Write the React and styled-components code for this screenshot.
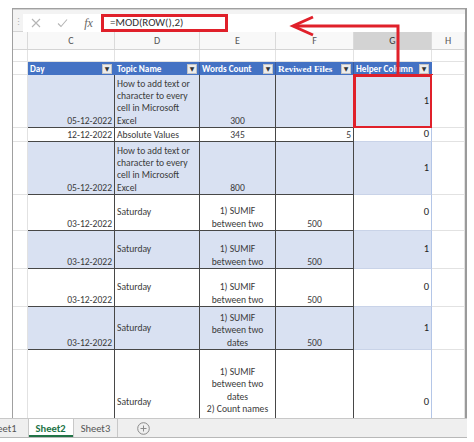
import React from 'react'
import styled, { createGlobalStyle } from 'styled-components'

const COLS = '15px 87px 85px 76px 78px 78px 1fr'
const DARK = '#474747'
const GRID = '#e2e2e2'
const SOFT = '#c9d3e8'

const GlobalStyle = createGlobalStyle`
  html, body {
    margin: 0;
    padding: 0;
    background: #fff;
  }
  body {
    font-family: Carlito, Lato, "Liberation Sans", sans-serif;
  }
`

const Page = styled.div`
    position: relative;
    width: 474px;
    height: 442px;
    padding-top: 8px;
    box-sizing: border-box;
    overflow: hidden;
`

const Sheet = styled.div`
    margin-left: 12px;
    width: 455px;
    border: 1px solid #a0a0a0;
    border-bottom: none;
    border-right: 2px solid #9a9a9a;
    box-sizing: border-box;
`

const FormulaBar = styled.div`
    display: flex;
    align-items: flex-start;
    height: 22px;
    padding-top: 4px;
    box-sizing: border-box;
    background: #f3f3f3;
    border-top: 1px solid #d0d0d0;
`

const Grip = styled.div`
    width: 10px;
    margin-top: 2px;
    color: #b0b0b0;
    font-size: 9px;
    text-align: center;
`

const IconBox = styled.div`
    display: flex;
    align-items: center;
    justify-content: space-around;
    width: 78px;
    height: 18px;
    background: #fff;
`

const Fx = styled.span`
    font-family: "Liberation Serif", serif;
    font-style: italic;
    font-size: 12px;
    color: #666;
`

const FormulaBox = styled.div`
    flex: 1;
    height: 18px;
    background: #fff;
    display: flex;
`

const Formula = styled.div`
    width: 127px;
    height: 18px;
    box-sizing: border-box;
    border: 3px solid #e0202a;
    padding-left: 6px;
    font-size: 11px;
    line-height: 12px;
    color: #333;
`

const ColHeads = styled.div`
    display: grid;
    grid-template-columns: ${COLS};
    height: 19px;
    box-sizing: border-box;
    background: #f8f8f8;
    border-top: 1px solid #d4d4d4;
    border-bottom: 1px solid #d4d4d4;
`

const ColHead = styled.div`
    display: flex;
    align-items: center;
    justify-content: center;
    border-right: 1px solid #dadada;
    background: ${p => p.$selected ? '#d3d3d3' : 'transparent'};
    font-size: 10px;
    color: ${p => p.$selected ? '#333' : '#555'};
`

const Body = styled.div`
    height: 368px;
    overflow: hidden;
`

const Row = styled.div`
    display: grid;
    grid-template-columns: ${COLS};
    height: ${p => p.$h}px;
`

const VALIGN = { top: 'flex-start', middle: 'center', bottom: 'flex-end' }

const Cell = styled.div`
    box-sizing: border-box;
    display: flex;
    flex-direction: column;
    justify-content: ${p => VALIGN[p.$v || 'bottom']};
    padding: ${p => p.$pt || 0}px 2px 0 2px;
    text-align: ${p => p.$align || 'left'};
    background: ${p => p.$fill ? '#d9e1f2' : '#fff'};
    border-right: 1px solid ${p => p.$line || GRID};
    border-bottom: 1px solid ${p => p.$under || GRID};
    outline: ${p => p.$mark ? '3px solid #e0202a' : 'none'};
    outline-offset: -2px;
    white-space: pre;
    overflow: hidden;
    font-size: ${p => p.$strong ? '10.5px' : '9.6px'};
    line-height: 12.3px;
    color: ${p => p.$strong ? '#1e1e1e' : '#3a3a3a'};
`

const HeadCell = styled.div`
    display: flex;
    align-items: center;
    justify-content: space-between;
    padding: 0 2px;
    background: #4472c4;
    border-right: 1px solid ${p => p.$edge ? '#3d5c99' : '#4472c4'};
    color: #fff;
    font-weight: 700;
    font-size: 9.2px;
    font-family: ${p => p.$serif ? '"Liberation Serif", serif' : 'inherit'};
    white-space: nowrap;
    overflow: hidden;
`

const Drop = styled.span`
    display: flex;
    flex-shrink: 0;
    align-items: center;
    justify-content: center;
    width: 8px;
    height: 8px;
    background: #ececec;
    border: 1px solid #c4c4c4;
    color: #333;
    font-size: 6px;
    line-height: 1;
    font-family: "DejaVu Sans", sans-serif;
`

const Tabs = styled.div`
    display: flex;
    align-items: stretch;
    width: 467px;
    height: 20px;
    box-sizing: border-box;
    background: #efefef;
    border-top: 1px solid #c8c8c8;
    border-bottom: 1px solid #b8b8b8;
    overflow: hidden;
`

const Tab = styled.div`
    display: flex;
    flex-shrink: 0;
    align-items: center;
    padding: 0 ${p => p.$cut ? '11px' : '7px'} 0 7px;
    margin-left: ${p => p.$cut ? '-20px' : '0'};
    background: ${p => p.$active ? '#fff' : 'transparent'};
    border-right: 1px solid #c8c8c8;
    font-size: 10.5px;
    font-weight: ${p => p.$active ? 700 : 400};
    color: ${p => p.$active ? '#217346' : '#555'};
    box-shadow: ${p => p.$active ? 'inset 0 -2px 0 #217346' : 'none'};
`

const AddSheet = styled.div`
    display: flex;
    align-items: center;
    margin-left: 19px;
    color: #777;
`

const Arrow = styled.svg`
    position: absolute;
    left: 0;
    top: 0;
    pointer-events: none;
`

const TOPIC = 'How to add text or\ncharacter to every\ncell in Microsoft\nExcel'
const SUMIF = '1) SUMIF\nbetween two'

const rows = [
    { h: 53, fill: true, day: '05-12-2022', topic: TOPIC, words: '300', files: '', helper: '1', mark: true },
    { h: 14, day: '12-12-2022', topic: 'Absolute Values', words: '345', files: '5', filesAlign: 'right', helper: '0' },
    { h: 53, fill: true, day: '05-12-2022', topic: TOPIC, words: '800', files: '', helper: '1' },
    { h: 36, day: '03-12-2022', topic: 'Saturday', tv: 'middle', words: SUMIF, files: '500', helper: '0' },
    { h: 38, fill: true, day: '03-12-2022', topic: 'Saturday', tv: 'middle', words: SUMIF, files: '500', helper: '1' },
    { h: 38, day: '03-12-2022', topic: 'Saturday', tv: 'middle', words: SUMIF, files: '500', helper: '0' },
    { h: 43, fill: true, day: '03-12-2022', topic: 'Saturday', tv: 'middle', words: SUMIF + '\ndates', files: '500', helper: '1' },
    { h: 106, day: '', topic: 'Saturday', tv: 'middle', words: SUMIF + '\ndates\n2) Count names', wv: 'top', wpt: 16, files: '', helper: '0' },
]

const headers = ['Day', 'Topic Name', 'Words Count', 'Reviwed Files', 'Helper Column']

const DataRow = ({ r }) => (
    <Row $h={r.h}>
        <Cell />
        <Cell $fill={r.fill} $align="right" $line={DARK} $under={DARK}>{r.day}</Cell>
        <Cell $fill={r.fill} $v={r.tv} $line={DARK} $under={DARK}>{r.topic}</Cell>
        <Cell $fill={r.fill} $align="center" $v={r.wv} $pt={r.wpt} $line={DARK} $under={DARK}>{r.words}</Cell>
        <Cell $fill={r.fill} $align={r.filesAlign || 'center'} $line={DARK} $under={DARK}>{r.files}</Cell>
        <Cell $fill={r.fill} $align="right" $v="middle" $line="#b4c6e7" $under={SOFT} $strong $mark={r.mark}>{r.helper}</Cell>
        <Cell />
    </Row>
)

const App = () => {
    return (
        <Page>
            <GlobalStyle />
            <Sheet>
                <FormulaBar>
                    <Grip>⋮</Grip>
                    <IconBox>
                        <svg width="10" height="10" viewBox="0 0 10 10">
                            <path d="M1 1L9 9M9 1L1 9" stroke="#b5b5b5" strokeWidth="1.1" fill="none" />
                        </svg>
                        <svg width="11" height="10" viewBox="0 0 11 10">
                            <path d="M1 5.5L4 8.5L10 1.5" stroke="#b5b5b5" strokeWidth="1.1" fill="none" />
                        </svg>
                        <Fx>fx</Fx>
                    </IconBox>
                    <FormulaBox>
                        <Formula>=MOD(ROW(),2)</Formula>
                    </FormulaBox>
                </FormulaBar>
                <ColHeads>
                    <ColHead />
                    <ColHead>C</ColHead>
                    <ColHead>D</ColHead>
                    <ColHead>E</ColHead>
                    <ColHead>F</ColHead>
                    <ColHead $selected>G</ColHead>
                    <ColHead>H</ColHead>
                </ColHeads>
                <Body>
                    <Row $h={12}>
                        <Cell /><Cell /><Cell /><Cell /><Cell /><Cell /><Cell />
                    </Row>
                    <Row $h={13}>
                        <Cell />
                        {headers.map((h, i) => (
                            <HeadCell key={h} $serif={i === 3} $edge={i > 0 && i < 4}>
                                {h}
                                <Drop>▼</Drop>
                            </HeadCell>
                        ))}
                        <Cell />
                    </Row>
                    {rows.map((r, i) => <DataRow key={i} r={r} />)}
                </Body>
            </Sheet>
            <Tabs>
                <Tab $cut>Sheet1</Tab>
                <Tab $active>Sheet2</Tab>
                <Tab>Sheet3</Tab>
                <AddSheet>
                    <svg width="13" height="13" viewBox="0 0 13 13">
                        <circle cx="6.5" cy="6.5" r="5.8" stroke="#8a8a8a" fill="none" />
                        <path d="M6.5 3.5V9.5M3.5 6.5H9.5" stroke="#8a8a8a" />
                    </svg>
                </AddSheet>
            </Tabs>
            <Arrow width="474" height="442" viewBox="0 0 474 442">
                <path d="M398 75V26H294" stroke="#e0202a" strokeWidth="3" fill="none" />
                <path d="M313 17L293 26L313 35" stroke="#e0202a" strokeWidth="3" fill="none" />
            </Arrow>
        </Page>
    )
}

export default App
